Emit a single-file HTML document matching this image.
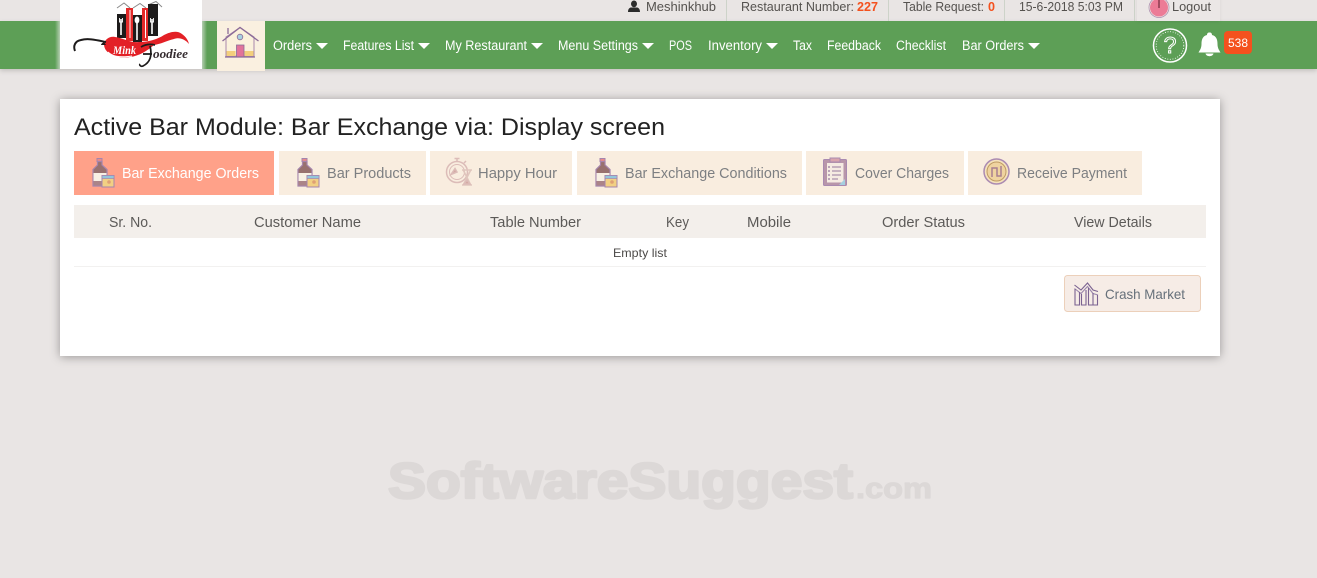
<!DOCTYPE html>
<html><head><meta charset="utf-8"><style>
html,body{margin:0;padding:0;background:#e9e5e4;width:1317px;height:578px;overflow:hidden}
svg{display:block}
text{font-family:"Liberation Sans",sans-serif}
.top{font-size:13px;fill:#55524f}
.or{font-size:13px;fill:#f4511e;font-weight:bold}
.nav{font-size:13.5px;fill:#fff}
.tab{font-size:14.5px;fill:#7d7f82}
.th{font-size:14.5px;fill:#5c5a58}
</style></head><body>
<svg width="1317" height="578" viewBox="0 0 1317 578" xmlns="http://www.w3.org/2000/svg">
<defs>
<filter id="s1" x="-5%" y="-10%" width="110%" height="125%"><feDropShadow dx="0" dy="1" stdDeviation="5" flood-color="#000" flood-opacity=".35"/></filter>
<filter id="s2" x="-20%" y="-50%" width="140%" height="200%"><feDropShadow dx="0" dy="2" stdDeviation="2.5" flood-color="#000" flood-opacity=".16"/></filter>
<filter id="s4" x="-20%" y="-50%" width="140%" height="200%"><feDropShadow dx="0" dy="1" stdDeviation="1.5" flood-color="#000" flood-opacity=".07"/></filter>
<linearGradient id="gl" x1="0" x2="1"><stop offset="0" stop-color="#5d9f57"/><stop offset="1" stop-color="#b6ceb2"/></linearGradient>
<linearGradient id="gr" x1="1" x2="0"><stop offset="0" stop-color="#5d9f57"/><stop offset="1" stop-color="#b6ceb2"/></linearGradient>
<g id="bottle">
<rect x="5" y="0.500" width="5" height="3" fill="#e98a8a" stroke="#a585ad"/>
<path d="M5.500 3.500v3.500L1 11.500V28h14V11.500L10 7V3.500z" fill="#98716f" stroke="#a585ad" stroke-width="1.200"/>
<rect x="1.500" y="15" width="13" height="8" fill="#f8f0e4"/>
<rect x="1.500" y="23" width="13" height="4.500" fill="#ab8488"/>
<rect x="10" y="17.500" width="12" height="11.500" fill="#f2d083" stroke="#a585ad"/>
<rect x="10" y="17.500" width="12" height="3" fill="#93c6dc" stroke="#a585ad" stroke-width=".7"/>
<circle cx="17" cy="24" r="1.800" fill="#dfa075"/>
</g>
</defs>
<rect width="1317" height="578" fill="#e9e5e4"/>
<rect x="0" y="21" width="1317" height="48" fill="#5d9f57" filter="url(#s2)"/>

<!-- top bar -->
<path d="M634 0.500a3 3.400 0 1 1 0 6.800a3 3.400 0 1 1 0-6.800zM628 12c0-3.500 2-4.500 3-4.500h6c1 0 3 1 3 4.500z" fill="#2b2b2b"/>
<text class="top" x="646" y="11" textLength="70" lengthAdjust="spacingAndGlyphs">Meshinkhub</text>
<rect x="726" y="0" width="1" height="21" fill="#cdd3c9"/>
<text class="top" x="741" y="11" textLength="113" lengthAdjust="spacingAndGlyphs">Restaurant Number:</text>
<text class="or" x="857" y="11" textLength="21" lengthAdjust="spacingAndGlyphs">227</text>
<rect x="888" y="0" width="1" height="21" fill="#cdd3c9"/>
<text class="top" x="903" y="11" textLength="81" lengthAdjust="spacingAndGlyphs">Table Request:</text>
<text class="or" x="988" y="11" textLength="7" lengthAdjust="spacingAndGlyphs">0</text>
<rect x="1004" y="0" width="1" height="21" fill="#cdd3c9"/>
<text class="top" x="1019" y="11" textLength="104" lengthAdjust="spacingAndGlyphs">15-6-2018 5:03 PM</text>
<rect x="1134" y="0" width="1" height="21" fill="#cdd3c9"/>
<rect x="1137" y="-6" width="83" height="27" fill="#ebe7e6" filter="url(#s4)"/>
<circle cx="1159" cy="7.500" r="9.500" fill="#ec7b96" stroke="#f3efe6" stroke-width="1"/>
<circle cx="1159" cy="7.500" r="10" fill="none" stroke="#ad8fb0" stroke-width=".8"/>
<rect x="1158" y="-1" width="2" height="9" fill="#a34b60"/>
<text class="top" x="1172" y="11" textLength="39" lengthAdjust="spacingAndGlyphs">Logout</text>

<!-- logo -->
<rect x="55" y="21" width="5" height="48" fill="url(#gl)"/>
<rect x="202" y="21" width="5" height="48" fill="url(#gr)"/>
<rect x="60" y="0" width="142" height="69" fill="#fff"/>
<g>
<path d="M117 8L124 3L130 8M133 8L140 3.500L146 8M148 5L156 1.500L162 7" fill="none" stroke="#8a8a8a" stroke-width="1"/>
<rect x="117" y="14" width="9" height="24" fill="#1d1b1b"/>
<rect x="126" y="8" width="7" height="33" fill="#e32a2a"/>
<rect x="133" y="15" width="9" height="27" fill="#1d1b1b"/>
<rect x="142" y="8" width="6" height="33" fill="#e32a2a"/>
<rect x="148" y="4" width="10" height="32" fill="#1d1b1b"/>
<path d="M121 19v16M137 17v23M152 19v15" stroke="#fff" stroke-width="1.600"/>
<path d="M119.500 18v4h3v-4M150.500 18v4h3v-4" fill="none" stroke="#fff" stroke-width=".9"/>
<ellipse cx="137" cy="20" rx="2.400" ry="3.500" fill="#fff"/>
<path d="M130 10v28M145.500 10v28" stroke="#fff" stroke-width="1"/>
<path d="M104 44c1-5 6-8 11-7c9 1 14 6 24 5c10 0 19-3 25-7c6-3 13-5 18-1c4 3 6 6 7 10c-4-5-10-7-15-5c-8 2-13 5-20 6c-7 6-15 11-24 12c-13 2-26-3-26-13z" fill="#e32026"/>
<path d="M106 42c-10-2-18-4-25-2c-6 1-8 6-6 11" fill="none" stroke="#1d1b1b" stroke-width="2"/>
<path d="M104 42c-2 1-3 2-3 3l5 0z" fill="#1d1b1b"/>
<path d="M108 52c4 4 10 6 24 4" fill="none" stroke="#fff" stroke-width="1"/>
<text x="113" y="54" font-size="12" font-weight="bold" fill="#fff" textLength="23" lengthAdjust="spacingAndGlyphs" style="font-family:'Liberation Serif',serif;font-style:italic">Mink</text>
<path d="M141 47c5-3 10-3 14-2M150 46c2 8 1 16-7 20c-2 1-4-1-3-2M143 54h9" fill="none" stroke="#1d1b1b" stroke-width="1.700"/>
<text x="153" y="58" font-size="12.500" font-weight="bold" fill="#352c30" textLength="35" lengthAdjust="spacingAndGlyphs" style="font-family:'Liberation Serif',serif;font-style:italic">oodiee</text>
</g>

<!-- home tile -->
<rect x="217" y="21" width="48" height="50" fill="#faf0e0"/>
<g>
<path d="M226 37v19h28V37L240 27.500z" fill="#fbf1dc" stroke="#a988ac" stroke-width="1"/>
<path d="M222.500 41L240 27.500L258.500 41" fill="none" stroke="#8b6b98" stroke-width="1.300"/>
<path d="M228 34v-6" stroke="#8b6b98" stroke-width="1.300"/>
<circle cx="240" cy="37" r="2.800" fill="#a8d1df" stroke="#8b6b98" stroke-width=".8"/>
<rect x="236.500" y="45" width="7.500" height="12" fill="#e2739a" stroke="#8b6b98" stroke-width=".8"/>
<rect x="226.500" y="51" width="9" height="5" fill="#f3cf7c"/>
<rect x="244.500" y="51" width="9" height="5" fill="#f3cf7c"/>
<path d="M225 57h30" stroke="#8b6b98" stroke-width="1.300"/>
</g>

<!-- nav -->
<g>
<text class="nav" x="273" y="50" textLength="39" lengthAdjust="spacingAndGlyphs">Orders</text>
<path d="M316 43h12l-6 6z" fill="#fff"/>
<text class="nav" x="343" y="50" textLength="71" lengthAdjust="spacingAndGlyphs">Features List</text>
<path d="M418 43h12l-6 6z" fill="#fff"/>
<text class="nav" x="445" y="50" textLength="82" lengthAdjust="spacingAndGlyphs">My Restaurant</text>
<path d="M531 43h12l-6 6z" fill="#fff"/>
<text class="nav" x="558" y="50" textLength="80" lengthAdjust="spacingAndGlyphs">Menu Settings</text>
<path d="M642 43h12l-6 6z" fill="#fff"/>
<text class="nav" x="669" y="50" textLength="23" lengthAdjust="spacingAndGlyphs">POS</text>
<text class="nav" x="708" y="50" textLength="54" lengthAdjust="spacingAndGlyphs">Inventory</text>
<path d="M766 43h12l-6 6z" fill="#fff"/>
<text class="nav" x="793" y="50" textLength="19" lengthAdjust="spacingAndGlyphs">Tax</text>
<text class="nav" x="827" y="50" textLength="54" lengthAdjust="spacingAndGlyphs">Feedback</text>
<text class="nav" x="896" y="50" textLength="50" lengthAdjust="spacingAndGlyphs">Checklist</text>
<text class="nav" x="962" y="50" textLength="62" lengthAdjust="spacingAndGlyphs">Bar Orders</text>
<path d="M1028 43h12l-6 6z" fill="#fff"/>
</g>

<!-- help + bell + badge -->
<circle cx="1170" cy="45.500" r="16.500" fill="none" stroke="#fff" stroke-width="1.500"/>
<circle cx="1170" cy="45.500" r="13.800" fill="none" stroke="#fff" stroke-width=".8" stroke-dasharray="1 1.600"/>
<text x="1170" y="53" text-anchor="middle" font-size="23" fill="none" stroke="#fff" stroke-width="1">?</text>
<path d="M1209.500 32.500c1.800 0 2.500 1 2.500 2.500c4.500 1 5.500 5 5.500 9c0 4 1.500 6 3 8.500H1198.500c1.500-2.500 3-4.500 3-8.500c0-4 1-8 5.500-9c0-1.500.7-2.500 2.500-2.500zM1205.500 53.500h8c-.5 2-2.500 2.700-4 2.700s-3.500-.7-4-2.700z" fill="#fff"/>
<rect x="1224" y="31" width="28" height="23" rx="4" fill="#f4511e"/>
<text x="1238" y="47" text-anchor="middle" font-size="12" fill="#fff">538</text>

<!-- panel -->
<rect x="60" y="99" width="1160" height="257" fill="#fff" filter="url(#s1)"/>
<text x="74" y="135" font-size="24" fill="#222" textLength="591" lengthAdjust="spacingAndGlyphs">Active Bar Module: Bar Exchange via: Display screen</text>

<!-- tabs -->
<rect x="74" y="151" width="200" height="44" fill="#ffa189"/>
<rect x="279" y="151" width="147" height="44" fill="#f9eddf"/>
<rect x="430" y="151" width="142" height="44" fill="#f9eddf"/>
<rect x="577" y="151" width="225" height="44" fill="#f9eddf"/>
<rect x="806" y="151" width="158" height="44" fill="#f9eddf"/>
<rect x="968" y="151" width="174" height="44" fill="#f9eddf"/>

<use href="#bottle" x="92" y="158"/>
<use href="#bottle" x="297" y="158"/>
<use href="#bottle" x="595" y="158"/>

<!-- clock -->
<g fill="none" stroke="#dcbcb8" stroke-width="1.500">
<circle cx="457" cy="172" r="10.500"/>
<circle cx="457" cy="172" r="7.500" stroke-width="1"/>
<path d="M457 161.500v-3M454.500 158.500h5M464 163l2-2"/>
<path d="M457 172l-6 2.500 4-6z" fill="#d3a8a2"/>
<path d="M462 170h10M462 185h10M463.500 170.500l3.500 7-3.500 7M470.500 170.500l-3.500 7 3.500 7" stroke="#e0c6bd"/>
<path d="M464 184l3-4 3 4z" fill="#d3a8a2"/>
</g>

<!-- clipboard -->
<rect x="823.500" y="159.500" width="23" height="26" rx="1" fill="#b896aa" stroke="#a98ab0" stroke-width="1"/>
<rect x="827" y="163" width="16.500" height="19.500" fill="#f5ebe2"/>
<rect x="830" y="158" width="10" height="4" fill="#d9a5ae" stroke="#a98ab0"/>
<path d="M832 167h9M832 171h9M832 175h9M832 179h6" stroke="#96789f" stroke-width="1"/>
<path d="M828 167h2M828 171h2M828 175h2M828 179h2" stroke="#96789f" stroke-width="1.300"/>
<path d="M839 185l6-6v6z" fill="#a5cfe0"/>

<!-- coin -->
<circle cx="996.500" cy="171.500" r="12.500" fill="#f5e2bc" stroke="#ab8bb2" stroke-width="1.500"/>
<circle cx="996.500" cy="171.500" r="9.500" fill="#efd3a0" stroke="#bf9b63" stroke-width="1"/>
<path d="M992 177v-9h5v8h4v-10" fill="none" stroke="#a9808f" stroke-width="1.500"/>

<!-- tab text -->
<text x="122" y="178" font-size="14.500" fill="#fff" textLength="137" lengthAdjust="spacingAndGlyphs">Bar Exchange Orders</text>
<text class="tab" x="327" y="178" textLength="84" lengthAdjust="spacingAndGlyphs">Bar Products</text>
<text class="tab" x="478" y="178" textLength="79" lengthAdjust="spacingAndGlyphs">Happy Hour</text>
<text class="tab" x="625" y="178" textLength="162" lengthAdjust="spacingAndGlyphs">Bar Exchange Conditions</text>
<text class="tab" x="855" y="178" textLength="94" lengthAdjust="spacingAndGlyphs">Cover Charges</text>
<text class="tab" x="1017" y="178" textLength="110" lengthAdjust="spacingAndGlyphs">Receive Payment</text>

<!-- table -->
<rect x="74" y="205" width="1132" height="33" fill="#f3efeb"/>
<text class="th" x="109" y="227" textLength="43" lengthAdjust="spacingAndGlyphs">Sr. No.</text>
<text class="th" x="254" y="227" textLength="107" lengthAdjust="spacingAndGlyphs">Customer Name</text>
<text class="th" x="490" y="227" textLength="91" lengthAdjust="spacingAndGlyphs">Table Number</text>
<text class="th" x="666" y="227" textLength="23" lengthAdjust="spacingAndGlyphs">Key</text>
<text class="th" x="747" y="227" textLength="44" lengthAdjust="spacingAndGlyphs">Mobile</text>
<text class="th" x="882" y="227" textLength="83" lengthAdjust="spacingAndGlyphs">Order Status</text>
<text class="th" x="1074" y="227" textLength="78" lengthAdjust="spacingAndGlyphs">View Details</text>
<text x="613" y="257" font-size="12" fill="#4c4a48" textLength="54" lengthAdjust="spacingAndGlyphs">Empty list</text>
<rect x="74" y="266" width="1132" height="1" fill="#f2f1f0"/>

<!-- crash market -->
<rect x="1064.500" y="275.500" width="136" height="36" rx="3" fill="#f6ece6" stroke="#ecd0ba"/>
<g fill="none" stroke="#7b6291" stroke-width="1.100">
<path d="M1074.500 285l6.500 5 6.500-7 5.500 7 5 1.500"/>
<path d="M1074.500 288.500l6.500 5 6.500-7 5.500 7 5 1.500" stroke="#9a85ac"/>
<path d="M1075 289v16h4.500v-13"/>
<path d="M1081.500 294v11h4.500v-15"/>
<path d="M1088.500 288v17h4.500v-12"/>
<path d="M1093 305h4.500v-10"/>
</g>
<text x="1105" y="299" font-size="14" fill="#66707a" textLength="80" lengthAdjust="spacingAndGlyphs">Crash Market</text>

<!-- watermark -->
<text x="388" y="498" font-size="50" font-weight="bold" fill="#dcd8d7" stroke="#dcd8d7" stroke-width="2.500" stroke-linejoin="round" textLength="465" lengthAdjust="spacingAndGlyphs">SoftwareSuggest</text>
<text x="856" y="498" font-size="29" font-weight="bold" fill="#dcd8d7" stroke="#dcd8d7" stroke-width="1.200" stroke-linejoin="round" textLength="76" lengthAdjust="spacingAndGlyphs">.com</text>
</svg>
</body></html>
